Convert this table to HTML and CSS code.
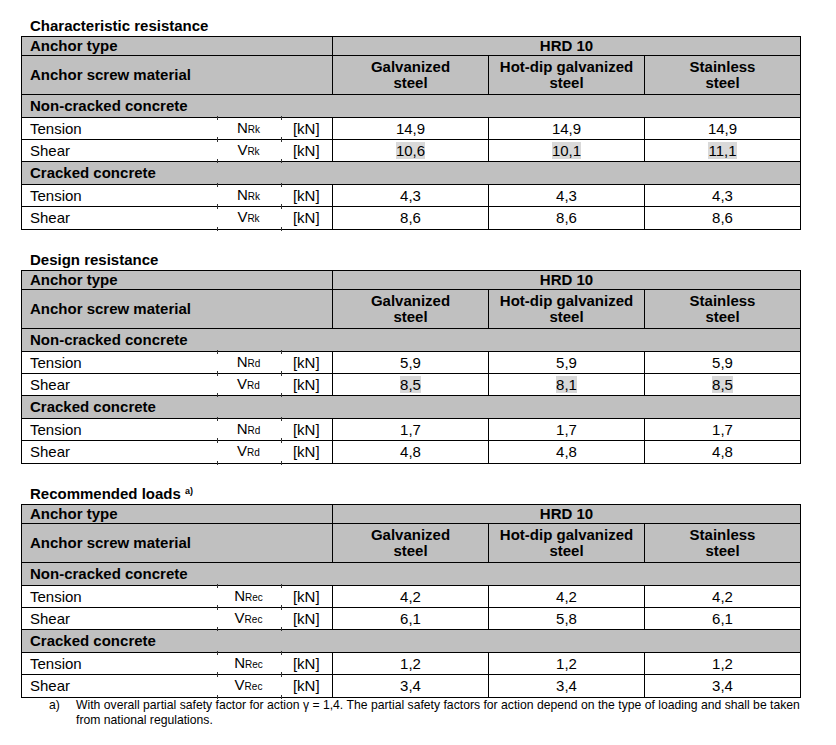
FILE: index.html
```html
<!DOCTYPE html>
<html lang="en">
<head>
<meta charset="utf-8">
<title>HRD 10 resistance tables</title>
<link rel="stylesheet" href="styles.css">
</head>
<body>
<div class="page">

  <section class="section">
    <h2 class="title">Characteristic resistance</h2>
    <table class="data">
      <colgroup><col class="c-lbl"><col class="c-sym"><col class="c-unit"><col class="c-val"><col class="c-val"><col class="c-val"></colgroup>
      <tr class="r-type"><th colspan="3" class="head-l">Anchor type</th><th colspan="3" class="head-c">HRD 10</th></tr>
      <tr class="r-mat"><th colspan="3" class="head-l">Anchor screw material</th><th class="head-c">Galvanized<br>steel</th><th class="head-c">Hot-dip galvanized<br>steel</th><th class="head-c">Stainless<br>steel</th></tr>
      <tr class="r-sec"><td colspan="6" class="sec">Non-cracked concrete</td></tr>
      <tr class="r-dat"><td class="lbl">Tension</td><td class="sym">N<span class="sub">Rk</span></td><td class="unit">[kN]</td><td class="val">14,9</td><td class="val">14,9</td><td class="val">14,9</td></tr>
      <tr class="r-dat"><td class="lbl">Shear</td><td class="sym">V<span class="sub">Rk</span></td><td class="unit">[kN]</td><td class="val"><span class="mark">10,6</span></td><td class="val"><span class="mark">10,1</span></td><td class="val"><span class="mark">11,1</span></td></tr>
      <tr class="r-sec"><td colspan="6" class="sec">Cracked concrete</td></tr>
      <tr class="r-dat"><td class="lbl">Tension</td><td class="sym">N<span class="sub">Rk</span></td><td class="unit">[kN]</td><td class="val">4,3</td><td class="val">4,3</td><td class="val">4,3</td></tr>
      <tr class="r-dat r-last"><td class="lbl">Shear</td><td class="sym">V<span class="sub">Rk</span></td><td class="unit">[kN]</td><td class="val">8,6</td><td class="val">8,6</td><td class="val">8,6</td></tr>
    </table>
  </section>

  <section class="section">
    <h2 class="title">Design resistance</h2>
    <table class="data">
      <colgroup><col class="c-lbl"><col class="c-sym"><col class="c-unit"><col class="c-val"><col class="c-val"><col class="c-val"></colgroup>
      <tr class="r-type"><th colspan="3" class="head-l">Anchor type</th><th colspan="3" class="head-c">HRD 10</th></tr>
      <tr class="r-mat"><th colspan="3" class="head-l">Anchor screw material</th><th class="head-c">Galvanized<br>steel</th><th class="head-c">Hot-dip galvanized<br>steel</th><th class="head-c">Stainless<br>steel</th></tr>
      <tr class="r-sec"><td colspan="6" class="sec">Non-cracked concrete</td></tr>
      <tr class="r-dat"><td class="lbl">Tension</td><td class="sym">N<span class="sub">Rd</span></td><td class="unit">[kN]</td><td class="val">5,9</td><td class="val">5,9</td><td class="val">5,9</td></tr>
      <tr class="r-dat"><td class="lbl">Shear</td><td class="sym">V<span class="sub">Rd</span></td><td class="unit">[kN]</td><td class="val"><span class="mark">8,5</span></td><td class="val"><span class="mark">8,1</span></td><td class="val"><span class="mark">8,5</span></td></tr>
      <tr class="r-sec"><td colspan="6" class="sec">Cracked concrete</td></tr>
      <tr class="r-dat"><td class="lbl">Tension</td><td class="sym">N<span class="sub">Rd</span></td><td class="unit">[kN]</td><td class="val">1,7</td><td class="val">1,7</td><td class="val">1,7</td></tr>
      <tr class="r-dat r-last"><td class="lbl">Shear</td><td class="sym">V<span class="sub">Rd</span></td><td class="unit">[kN]</td><td class="val">4,8</td><td class="val">4,8</td><td class="val">4,8</td></tr>
    </table>
  </section>

  <section class="section last">
    <h2 class="title">Recommended loads <sup class="sup">a)</sup></h2>
    <table class="data">
      <colgroup><col class="c-lbl"><col class="c-sym"><col class="c-unit"><col class="c-val"><col class="c-val"><col class="c-val"></colgroup>
      <tr class="r-type"><th colspan="3" class="head-l">Anchor type</th><th colspan="3" class="head-c">HRD 10</th></tr>
      <tr class="r-mat"><th colspan="3" class="head-l">Anchor screw material</th><th class="head-c">Galvanized<br>steel</th><th class="head-c">Hot-dip galvanized<br>steel</th><th class="head-c">Stainless<br>steel</th></tr>
      <tr class="r-sec"><td colspan="6" class="sec">Non-cracked concrete</td></tr>
      <tr class="r-dat"><td class="lbl">Tension</td><td class="sym">N<span class="sub">Rec</span></td><td class="unit">[kN]</td><td class="val">4,2</td><td class="val">4,2</td><td class="val">4,2</td></tr>
      <tr class="r-dat"><td class="lbl">Shear</td><td class="sym">V<span class="sub">Rec</span></td><td class="unit">[kN]</td><td class="val">6,1</td><td class="val">5,8</td><td class="val">6,1</td></tr>
      <tr class="r-sec"><td colspan="6" class="sec">Cracked concrete</td></tr>
      <tr class="r-dat"><td class="lbl">Tension</td><td class="sym">N<span class="sub">Rec</span></td><td class="unit">[kN]</td><td class="val">1,2</td><td class="val">1,2</td><td class="val">1,2</td></tr>
      <tr class="r-dat r-last"><td class="lbl">Shear</td><td class="sym">V<span class="sub">Rec</span></td><td class="unit">[kN]</td><td class="val">3,4</td><td class="val">3,4</td><td class="val">3,4</td></tr>
    </table>
    <div class="note">
      <span class="note-label">a)</span>
      <span class="note-text">With overall partial safety factor for action γ = 1,4. The partial safety factors for action depend on the type of loading and shall be taken from national regulations.</span>
    </div>
  </section>

</div>
</body>
</html>
```

FILE: styles.css
```css
html, body {
  margin: 0;
  padding: 0;
  background: #ffffff;
}

body {
  font-family: "Liberation Sans", Arial, sans-serif;
  color: #000000;
}

.page {
  padding: 18px 0 0 21px;
}

.section {
  margin-bottom: 22px;
}

.title {
  font-size: 15px;
  font-weight: bold;
  line-height: 16px;
  margin: 0 0 2px 9px;
}

.sup {
  font-size: 9px;
  line-height: 0;
  vertical-align: 5px;
}

.data {
  border-collapse: collapse;
  table-layout: fixed;
  width: 779px;
  font-size: 15px;
}

.c-lbl { width: 195px; }
.c-sym { width: 64px; }
.c-unit { width: 52px; }
.c-val { width: 156px; }

.data th,
.data td {
  border: 1px solid #000000;
  padding: 0 8px;
  line-height: 16px;
  vertical-align: middle;
}

.data th {
  background: #c0c0c0;
  font-weight: bold;
}

.head-l { text-align: left; }
.head-c { text-align: center; line-height: 17px; }

.r-type th { height: 18px; }
.r-mat th { height: 38px; }
.r-sec td { height: 22px; }
.r-dat td { height: 21px; }
.r-dat.r-last td { height: 22px; }

.sec {
  background: #c0c0c0;
  font-weight: bold;
  text-align: left;
}

.lbl {
  text-align: left;
  border-right: none !important;
}

.sym {
  position: relative;
  text-align: center;
  border-left: none !important;
  border-right: none !important;
  padding: 0 !important;
}

.unit {
  position: relative;
  text-align: center;
  border-left: none !important;
  padding: 0 !important;
}

/* small rule ticks left by the column grid at row boundaries */
.sym::before,
.sym::after,
.unit::before,
.unit::after {
  content: "";
  position: absolute;
  left: 0;
  width: 1px;
  height: 4px;
  background: #333333;
}

.sym::before,
.unit::before {
  top: -2px;
}

.sym::after,
.unit::after {
  bottom: -2px;
}

.sub {
  font-size: 10px;
}

.val {
  text-align: center;
}

.mark {
  background: #d9d9d9;
}

.note {
  display: flex;
  font-size: 12.2px;
  line-height: 15px;
  margin-top: 0;
  padding-left: 28px;
}

.note-label {
  flex: 0 0 27px;
}

.note-text {
  width: 732px;
}
```
